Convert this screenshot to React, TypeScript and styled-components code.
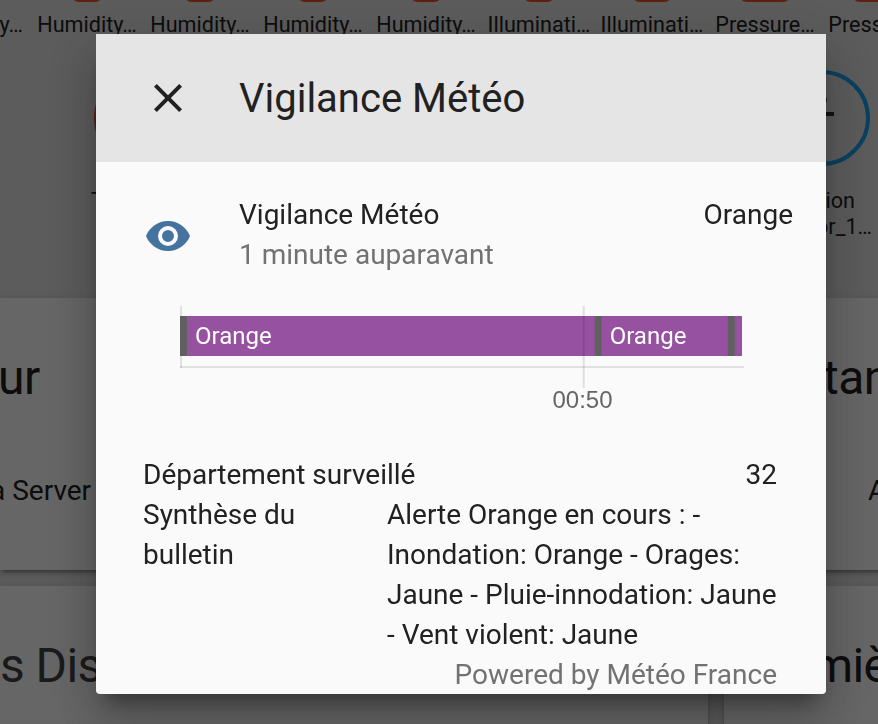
import React from "react";
import styled, { createGlobalStyle } from "styled-components";

const GlobalStyle = createGlobalStyle`
  html, body { margin: 0; padding: 0; }
  body {
    font-family: Roboto, "Liberation Sans", sans-serif;
    -webkit-font-smoothing: antialiased;
    color: #212121;
    overflow: hidden;
  }
  * { box-sizing: border-box; }
`;

const Page = styled.div`
  width: 878px;
  height: 724px;
  overflow: hidden;
  background: #e5e5e5;
`;

const Badges = styled.div`
  height: 298px;
  overflow: hidden;
`;

const BadgeRow = styled.div`
  display: flex;
  width: 1017px;
  height: 70px;
  margin-left: -83px;
`;

const Badge = styled.div`
  flex: none;
  width: 113px;
  display: flex;
  flex-direction: column;
  align-items: center;
`;

const Pill = styled.div<{ $width: number }>`
  width: ${(p) => p.$width}px;
  height: 2px;
  border-radius: 0 0 8px 8px / 0 0 2px 2px;
  background: #ee5028;
`;

const BadgeName = styled.div`
  margin-top: 9px;
  padding-left: 1px;
  font-size: 21.6px;
  line-height: 28px;
  white-space: nowrap;
`;

const LowerBadgeRow = styled.div`
  display: flex;
  justify-content: space-between;
  width: 790px;
  margin-left: 87px;
`;

const LowerBadge = styled.div`
  width: 110px;
  display: flex;
  flex-direction: column;
  align-items: center;
`;

const Circle = styled.div<{ $color: string }>`
  display: flex;
  align-items: center;
  justify-content: center;
  width: 96px;
  height: 96px;
  border: 4px solid ${(p) => p.$color};
  border-radius: 50%;
`;

const LowerName = styled.div<{ $align: "left" | "right"; $inset: number }>`
  width: 100%;
  margin-top: 22px;
  padding: 0 ${(p) => p.$inset}px;
  font-size: 21.6px;
  line-height: 26px;
  text-align: ${(p) => p.$align};
  white-space: nowrap;
  & + & { margin-top: 0; }
`;

const Columns = styled.div`
  display: grid;
  grid-template-columns: 708px 300px;
  column-gap: 16px;
`;

const Column = styled.div`
  display: flex;
  flex-direction: column;
  gap: 16px;
`;

const Card = styled.section<{ $height: number }>`
  height: ${(p) => p.$height}px;
  background: #fff;
  box-shadow: 0 4px 4px rgba(0, 0, 0, 0.14), 0 2px 10px rgba(0, 0, 0, 0.12),
    0 6px 2px -4px rgba(0, 0, 0, 0.2);
`;

const CardTitle = styled.h2<{ $indent: number; $soft?: boolean }>`
  margin: 0;
  padding-top: 48px;
  text-indent: ${(p) => p.$indent}px;
  font-size: 48px;
  font-weight: 400;
  line-height: 64px;
  letter-spacing: -0.576px;
  color: ${(p) => (p.$soft ? "#434343" : "#212121")};
  white-space: nowrap;
`;

const CardRow = styled.div<{ $indent: number }>`
  padding-top: 61px;
  text-indent: ${(p) => p.$indent}px;
  font-size: 28px;
  line-height: 40px;
  white-space: nowrap;
`;

const Backdrop = styled.div`
  position: fixed;
  inset: 0;
  background: rgba(0, 0, 0, 0.6);
  padding: 34px 52px 30px 96px;
`;

const Dialog = styled.div`
  width: 730px;
  height: 660px;
  background: #fafafa;
  border-radius: 0 0 4px 4px;
  box-shadow: 0 32px 48px 4px rgba(0, 0, 0, 0.14),
    0 12px 60px 10px rgba(0, 0, 0, 0.12),
    0 16px 20px -10px rgba(0, 0, 0, 0.4);
`;

const DialogHeader = styled.header`
  display: grid;
  grid-template-columns: 95px 1fr;
  align-items: center;
  height: 128px;
  padding-left: 48px;
  background: #e5e5e5;
`;

const DialogTitle = styled.h1`
  margin: 0;
  padding-top: 2px;
  font-size: 40px;
  font-weight: 400;
  line-height: 48px;
`;

const Icon = styled.svg`
  display: block;
  width: 48px;
  height: 48px;
`;

const EyeIcon = styled(Icon)`
  margin-top: 2px;
`;

const StateRow = styled.div`
  display: grid;
  grid-template-columns: 95px 1fr auto;
  align-items: center;
  padding: 33px 33px 0 48px;
  font-size: 28px;
  line-height: 40px;
`;

const StateValue = styled.div`
  align-self: start;
`;

const Secondary = styled.div<{ $right?: boolean }>`
  color: #727272;
  text-align: ${(p) => (p.$right ? "right" : "left")};
`;

const Chart = styled.svg`
  display: block;
  width: 570px;
  height: 110px;
  margin: 31px 0 0 84px;
`;

const Attributes = styled.div`
  padding: 39px 49px 0 47px;
  font-size: 28px;
  line-height: 40px;
`;

const Attribute = styled.div`
  display: flex;
  justify-content: space-between;
`;

const Key = styled.div`
  max-width: 200px;
  white-space: nowrap;
`;

const WrappedKey = styled(Key)`
  white-space: normal;
`;

const Value = styled.div`
  max-width: 390px;
`;

const badges = [
  { name: "y…", pill: 26 },
  { name: "Humidity…", pill: 26 },
  { name: "Humidity…", pill: 26 },
  { name: "Humidity…", pill: 26 },
  { name: "Humidity…", pill: 26 },
  { name: "Illuminati…", pill: 26 },
  { name: "Illuminati…", pill: 34 },
  { name: "Pressure…", pill: 46 },
  { name: "Pressure…", pill: 46 },
];

const PartialName = styled(BadgeName)`
  align-self: flex-end;
  padding-right: 7px;
`;

function History() {
  return (
    <Chart viewBox="180 306 570 110">
      <g fill="#000" fillOpacity=".1">
        <rect x="180" y="306" width="2" height="62" />
        <rect x="180" y="366" width="564" height="2" />
      </g>
      <rect x="180" y="316" width="562" height="40" fill="#9651a0" />
      <g fill="#606060">
        <rect x="180" y="316" width="7" height="40" />
        <rect x="594.7" y="316" width="6.8" height="40" />
        <rect x="727.7" y="316" width="7" height="40" />
      </g>
      <rect x="582.7" y="306" width="2" height="82" fill="#000" fillOpacity=".1" />
      <g fill="#fff" fontSize="24">
        <text x="195" y="344">Orange</text>
        <text x="609.7" y="344">Orange</text>
      </g>
      <text x="582.5" y="408" fill="#666" fontSize="24" textAnchor="middle" fontFamily="Liberation Sans, sans-serif">
        00:50
      </text>
    </Chart>
  );
}

export default function App() {
  return (
    <>
      <GlobalStyle />
      <Page>
        <Badges>
          <BadgeRow>
            {badges.map((badge, i) => (
              <Badge key={i}>
                <Pill $width={badge.pill} />
                {i === 0 ? (
                  <PartialName>{badge.name}</PartialName>
                ) : (
                  <BadgeName>{badge.name}</BadgeName>
                )}
              </Badge>
            ))}
          </BadgeRow>
          <LowerBadgeRow>
            <LowerBadge>
              <Circle $color="#ee5028" />
              <LowerName $align="left" $inset={4}>T</LowerName>
            </LowerBadge>
            <LowerBadge>
              <Circle $color="#1aa3ec">
                <Icon viewBox="0 0 48 48" fill="#303030">
                  <circle cx="24" cy="6" r="5" />
                  <rect x="12" y="18" width="24" height="4" />
                </Icon>
              </Circle>
              <LowerName $align="right" $inset={22}>ion</LowerName>
              <LowerName $align="right" $inset={5}>or_1…</LowerName>
            </LowerBadge>
          </LowerBadgeRow>
        </Badges>
        <Columns>
          <Column>
            <Card $height={272}>
              <CardTitle $indent={-2}>ur</CardTitle>
              <CardRow $indent={-10}>a Server</CardRow>
            </Card>
            <Card $height={272}>
              <CardTitle $indent={0} $soft>s Dis</CardTitle>
            </Card>
          </Column>
          <Column>
            <Card $height={272}>
              <CardTitle $indent={99}>tan</CardTitle>
              <CardRow $indent={144}>A</CardRow>
            </Card>
            <Card $height={272}>
              <CardTitle $indent={87}>miè</CardTitle>
            </Card>
          </Column>
        </Columns>
      </Page>
      <Backdrop>
        <Dialog role="dialog">
          <DialogHeader>
            <Icon viewBox="0 0 24 24" fill="#212121">
              <path d="M19 6.41 17.59 5 12 10.59 6.41 5 5 6.41 10.59 12 5 17.59 6.41 19 12 13.41 17.59 19 19 17.59 13.41 12z" />
            </Icon>
            <DialogTitle>Vigilance Météo</DialogTitle>
          </DialogHeader>
          <StateRow>
            <EyeIcon viewBox="0 0 24 24" fill="#44739e">
              <path d="M12 9a3 3 0 1 0 0 6 3 3 0 0 0 0-6m0 8a5 5 0 1 1 0-10 5 5 0 0 1 0 10m0-12.5C7 4.500 2.730 7.610 1 12c1.730 4.390 6 7.500 11 7.500s9.270-3.110 11-7.500c-1.730-4.390-6-7.500-11-7.500z" />
            </EyeIcon>
            <div>
              <div>Vigilance Météo</div>
              <Secondary>1 minute auparavant</Secondary>
            </div>
            <StateValue>Orange</StateValue>
          </StateRow>
          <History />
          <Attributes>
            <Attribute>
              <Key>Département surveillé</Key>
              <Value>32</Value>
            </Attribute>
            <Attribute>
              <WrappedKey>Synthèse du bulletin</WrappedKey>
              <Value>
                Alerte Orange en cours : - Inondation: Orange - Orages: Jaune -
                Pluie-innodation: Jaune - Vent violent: Jaune
              </Value>
            </Attribute>
            <Secondary $right>Powered by Météo France</Secondary>
          </Attributes>
        </Dialog>
      </Backdrop>
    </>
  );
}
